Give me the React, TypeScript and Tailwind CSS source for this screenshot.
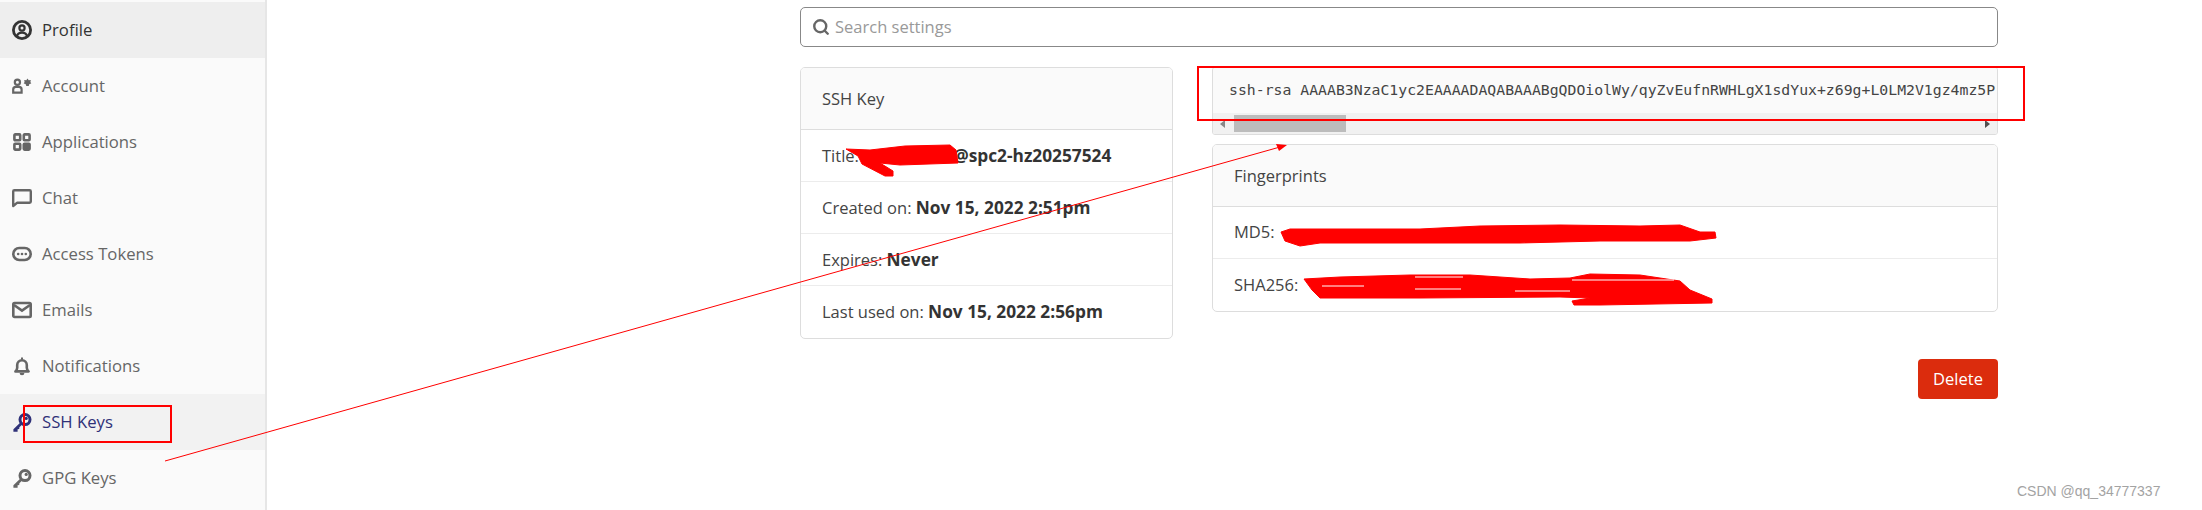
import React from 'react';
import { Search } from 'lucide-react';

const sans = 'font-["Open_Sans","Noto_Sans",sans-serif]';

const ProfileIcon = () => (
  <svg viewBox="0 0 20 20" className="w-5 h-5" fill="none" stroke="currentColor" strokeWidth="2.8">
    <circle cx="10" cy="10" r="8.6" />
    <circle cx="10" cy="8" r="2.6" strokeWidth="2.2" />
    <path d="M4.8 16.4c.6-2.8 2.6-3.8 5.2-3.8s4.6 1 5.2 3.8" strokeWidth="2.2" />
  </svg>
);

const AccountIcon = () => (
  <svg viewBox="0 0 20 20" className="w-5 h-5" fill="none" stroke="currentColor" strokeWidth="2.2">
    <circle cx="5.4" cy="6.2" r="2.6" />
    <path d="M1.2 16.6v-3.2c0-1.6 1-2.6 2.6-2.6h3.2c1.6 0 2.6 1 2.6 2.6v3.2Z" />
    <path d="M15.5 2.6l1.2 1.6 2.1-.1-.4 2 .9 1.4-1.9.6-.7 2h-2.4l-.7-2-1.9-.6.9-1.4-.4-2 2.1.1Z" fill="currentColor" stroke="none" />
  </svg>
);

const AppsIcon = () => (
  <svg viewBox="0 0 20 20" className="w-5 h-5" fill="none" stroke="currentColor" strokeWidth="2.6">
    <rect x="2.4" y="2.4" width="5.8" height="5.8" rx=".8" />
    <rect x="11.8" y="2.4" width="5.8" height="5.8" rx=".8" />
    <rect x="2.4" y="11.8" width="5.8" height="5.8" rx=".8" />
    <rect x="11.8" y="11.8" width="5.8" height="5.8" rx=".8" fill="currentColor" />
  </svg>
);

const ChatIcon = () => (
  <svg viewBox="0 0 20 20" className="w-5 h-5" fill="none" stroke="currentColor" strokeWidth="2.4">
    <path d="M1.2 18V3.4c0-.8.5-1.2 1.2-1.2h15.2c.7 0 1.2.4 1.2 1.2v10.2c0 .8-.5 1.2-1.2 1.2H5Z" strokeLinejoin="round" />
  </svg>
);

const TokenIcon = () => (
  <svg viewBox="0 0 20 20" className="w-5 h-5" fill="none" stroke="currentColor" strokeWidth="2.6">
    <rect x="1.3" y="4" width="17.4" height="12" rx="6" />
    <circle cx="6.2" cy="10" r="1.3" fill="currentColor" stroke="none" />
    <circle cx="10" cy="10" r="1.3" fill="currentColor" stroke="none" />
    <circle cx="13.8" cy="10" r="1.3" fill="currentColor" stroke="none" />
  </svg>
);

const MailIcon = () => (
  <svg viewBox="0 0 20 20" className="w-5 h-5" fill="none" stroke="currentColor" strokeWidth="2.6">
    <rect x="1.3" y="3" width="17.4" height="14" rx="1.2" />
    <path d="M2 5l8 5.6L18 5" />
  </svg>
);

const BellIcon = () => (
  <svg viewBox="0 0 20 20" className="w-5 h-5" fill="none" stroke="currentColor" strokeWidth="2.6">
    <path d="M3.4 15.4c1.2-1 1.8-2 1.8-3.6V9a4.8 4.8 0 0 1 9.6 0v2.8c0 1.6.6 2.6 1.8 3.6Z" strokeLinejoin="round" />
    <path d="M7.6 17h4.8a2.4 2.2 0 0 1-4.8 0Z" fill="currentColor" stroke="none" />
    <path d="M10 1.4v2" strokeWidth="2" />
  </svg>
);

const KeyIcon = () => (
  <svg viewBox="0 0 20 20" className="w-5 h-5" fill="none" stroke="currentColor">
    <circle cx="13" cy="7.6" r="5" strokeWidth="3" />
    <path d="M8.4 10.4L1.4 17.2v2.6h4.2v-2.6l1.6-.2.2-1.8 2.8-2.6Z" fill="currentColor" stroke="none" />
    <circle cx="14.2" cy="6.4" r="1.6" fill="currentColor" stroke="none" />
  </svg>
);

const navItems = [
  { label: 'Profile', icon: ProfileIcon, style: 'bg-[#eeeeee] text-[#333333]' },
  { label: 'Account', icon: AccountIcon, style: 'text-[#666666]' },
  { label: 'Applications', icon: AppsIcon, style: 'text-[#666666]' },
  { label: 'Chat', icon: ChatIcon, style: 'text-[#666666]' },
  { label: 'Access Tokens', icon: TokenIcon, style: 'text-[#666666]' },
  { label: 'Emails', icon: MailIcon, style: 'text-[#666666]' },
  { label: 'Notifications', icon: BellIcon, style: 'text-[#666666]' },
  { label: 'SSH Keys', icon: KeyIcon, style: 'bg-[#f2f2f2] text-[#2f3178]' },
  { label: 'GPG Keys', icon: KeyIcon, style: 'text-[#666666]' },
];

const sshKey = 'ssh-rsa AAAAB3NzaC1yc2EAAAADAQABAAABgQDOiolWy/qyZvEufnRWHLgX1sdYux+z69g+L0LM2V1gz4mz5P';

function Row({ children, last }: { children: React.ReactNode; last?: boolean }) {
  return (
    <div className={`h-[52px] flex items-center px-[21px] text-[16.5px] text-[#444444] ${last ? '' : 'border-b border-[#ececec]'}`}>
      <div>{children}</div>
    </div>
  );
}

function CardHeader({ title }: { title: string }) {
  return (
    <div className="h-[62px] flex items-center px-[21px] pt-[2px] bg-[#fafafa] border-b border-[#dddddd] text-[16.5px] text-[#444444]">
      {title}
    </div>
  );
}

export default function App() {
  return (
    <div className={`relative w-[2202px] h-[510px] overflow-hidden bg-white flex ${sans}`}>
      <aside className="w-[267px] h-full pt-[2px] bg-[#fafafa] border-r-2 border-[#e6e6e6]">
        {navItems.map(({ label, icon: Icon, style }) => (
          <div key={label} className={`h-[56px] flex items-center gap-[10px] pl-3 text-[16.7px] ${style}`}>
            <Icon />
            <span>{label}</span>
          </div>
        ))}
      </aside>

      <main className="w-[1198px] ml-[533px] pt-[7px]">
        <div className="h-[40px] flex items-center gap-[5px] px-[11px] border border-[#888888] rounded-[5px] text-[16.5px] text-[#999999]">
          <Search className="w-[18px] h-[18px] text-[#666666]" strokeWidth={3.2} />
          <span className="mt-[1px]">Search settings</span>
        </div>

        <div className="flex items-start gap-[39px] mt-[20px]">
          <section className="w-[373px] border border-[#dddddd] rounded-[5px] overflow-hidden">
            <CardHeader title="SSH Key" />
            <Row>
              Title: <span className="inline-block w-[90px]" /><strong className="font-bold text-[17.3px] text-[#333333]">@spc2-hz20257524</strong>
            </Row>
            <Row>
              Created on: <strong className="font-bold text-[17.3px] text-[#333333]">Nov 15, 2022 2:51pm</strong>
            </Row>
            <Row>
              Expires: <strong className="font-bold text-[17.3px] text-[#333333]">Never</strong>
            </Row>
            <Row last>
              Last used on: <strong className="font-bold text-[17.3px] text-[#333333]">Nov 15, 2022 2:56pm</strong>
            </Row>
          </section>

          <div className="w-[786px]">
            <div className="border border-[#dddddd] rounded-[3px] overflow-hidden">
              <div className="h-[45px] flex items-center pl-[16px] bg-[#fafafa] whitespace-nowrap overflow-hidden font-['DejaVu_Sans_Mono',monospace] text-[14.8px] text-[#444444]">
                {sshKey}
              </div>
              <div className="h-[21px] flex items-center justify-between bg-[#f1f1f1] px-[7px]">
                <div className="flex items-center gap-[9px]">
                  <div className="w-0 h-0 border-y-[4px] border-y-transparent border-r-[5px] border-r-[#888888]" />
                  <div className="w-[112px] h-[17px] bg-[#bcbcbc]" />
                </div>
                <div className="w-0 h-0 border-y-[4px] border-y-transparent border-l-[5px] border-l-[#505050]" />
              </div>
            </div>

            <section className="mt-[9px] border border-[#dddddd] rounded-[5px] overflow-hidden">
              <CardHeader title="Fingerprints" />
              <Row>MD5:</Row>
              <Row last>SHA256:</Row>
            </section>

            <div className="flex justify-end mt-[47px]">
              <button className="w-[80px] h-[40px] rounded-[4px] bg-[#db2c0d] text-white text-[16.5px]">Delete</button>
            </div>
          </div>
        </div>
      </main>

      {/* annotations drawn on top of the screenshot */}
      <svg className="absolute inset-0 pointer-events-none" width="2202" height="510" viewBox="0 0 2202 510" fill="none">
        <rect x="24" y="406" width="147" height="36" stroke="#ff0000" strokeWidth="2" />
        <rect x="1198" y="67" width="826" height="53" stroke="#ff0000" strokeWidth="2" />
        <path d="M165 461L1280 147" stroke="#ff0000" strokeWidth="1" />
        <path d="M1287 145L1276 144L1279 151Z" fill="#ff0000" />
        <path d="M846 149L870 150L905 146L950 145L956 150L958 163L900 165L880 163L893 171L893 176L885 176L862 164L858 156Z" fill="#ff0000" stroke="#ff0000" />
        <path d="M1281 232L1290 229L1420 229L1480 226L1560 225L1640 226L1680 225L1700 232L1715 232L1716 238L1690 241L1600 241L1520 243L1360 243L1320 243L1300 246L1285 241Z" fill="#ff0000" stroke="#ff0000" />
        <path d="M1304 279L1340 277L1410 275L1470 275L1530 279L1570 278L1590 274L1640 275L1680 281L1690 290L1712 299L1712 303L1600 305L1574 305L1572 301L1590 298L1560 297L1420 298L1320 298L1312 290Z" fill="#ff0000" stroke="#ff0000" />
        <path d="M1322 286H1364M1415 277H1463M1415 289H1461M1515 291H1570M1572 280H1674" stroke="#ffffff" strokeWidth="1" />
      </svg>

      <div className="absolute left-[2017px] top-[483px] font-['Liberation_Sans',sans-serif] text-[14px] leading-[17px] text-[#a3a3a3]">
        CSDN @qq_34777337
      </div>
    </div>
  );
}
